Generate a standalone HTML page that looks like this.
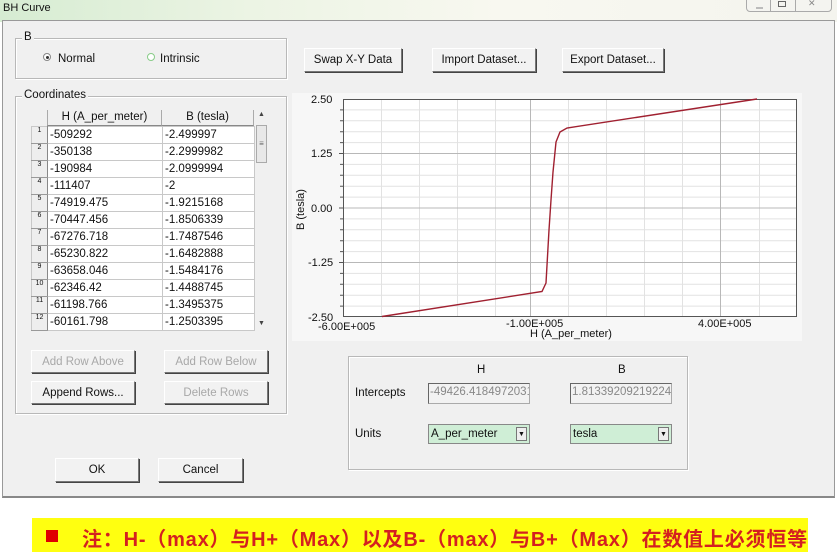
<!DOCTYPE html>
<html><head><meta charset="utf-8"><style>
*{box-sizing:border-box;margin:0;padding:0}
body{width:837px;height:552px;position:relative;overflow:hidden;background:#fff;font-family:"Liberation Sans",Arial,sans-serif;font-size:11.5px;color:#111}
.a{position:absolute}
.grp{position:absolute;border:1px solid #b8b8b8;box-shadow:inset 1px 1px 0 #fff,1px 1px 0 #fff}
.lg{position:absolute;top:-8px;left:6px;background:#f0f0f0;padding:0 2px;font-size:11.5px}
.btn{position:absolute;background:#f2f2f2;border:1px solid #fff;border-right-color:#777;border-bottom-color:#777;box-shadow:1px 1px 0 #444;text-align:center;font-size:11.5px;display:flex;align-items:center;justify-content:center}
.dis{color:#a8a8a8}
table{border-collapse:collapse;font-size:11.5px}
td{border:1px solid #c8c8c8;height:17px;padding:0 2px;background:#fff;white-space:nowrap}
td.n{background:#eee;font-size:7px;vertical-align:top;text-align:center;width:16px;border-right:1px solid #888;border-bottom:1px solid #999}
.fld{position:absolute;border:1px solid #aaa;border-top-color:#666;border-left-color:#666;background:#f2f2f2;color:#888;font-size:11.5px;padding:2px 1px;white-space:nowrap;overflow:hidden}
.dd{position:absolute;background:#cfeed6;border:1px solid #888;font-size:11.5px;padding:3px 2px}
.dd b{position:absolute;right:2px;top:2px;width:11px;height:14px;background:#eee;border:1px solid #777;font-size:7px;text-align:center;line-height:13px;font-weight:normal}
</style></head><body>
<div class="a" style="left:0;top:0;width:837px;height:22px;background:linear-gradient(90deg,#d6ecd2,#ecf4e4 30%,#f8f8f0 60%,#f4f4ee)"></div>
<div class="a" style="left:3px;top:2px;font-size:11px">BH Curve</div>
<div class="a" style="left:746px;top:-2px;width:86px;height:14px;border:1px solid #aaa;border-radius:0 0 4px 4px;background:#f4f4f0"></div>
<div class="a" style="left:770px;top:-2px;width:1px;height:14px;background:#aaa"></div>
<div class="a" style="left:795px;top:-2px;width:1px;height:14px;background:#aaa"></div>
<div class="a" style="left:756px;top:7px;width:7px;height:2px;background:#bbb"></div>
<div class="a" style="left:778px;top:1px;width:8px;height:6px;border:1px solid #666"></div>
<div class="a" style="left:808px;top:-2px;font-size:9px;color:#888">✕</div>
<div class="a" style="left:2px;top:20px;width:833px;height:478px;background:#f0f0f0;border:1px solid #999;border-bottom:2px solid #888"></div>

<div class="grp" style="left:15px;top:38px;width:272px;height:41px"><span class="lg">B</span></div>
<div class="a" style="left:43px;top:53px;width:8px;height:8px;border-radius:50%;border:1px solid #888;background:#fff"></div>
<div class="a" style="left:46px;top:56px;width:3px;height:3px;border-radius:50%;background:#333"></div>
<div class="a" style="left:58px;top:53px">Normal</div>
<div class="a" style="left:147px;top:53px;width:8px;height:8px;border-radius:50%;border:1px solid #8c8;background:#fff"></div>
<div class="a" style="left:160px;top:53px">Intrinsic</div>

<div class="grp" style="left:15px;top:96px;width:272px;height:318px"><span class="lg">Coordinates</span></div>
<div class="a" style="left:31px;top:110px;width:224px;height:16px;background:#f0f0f0"></div>
<div class="a" style="left:47px;top:110px;width:115px;height:16px;border-left:1px solid #aaa;border-right:1px solid #aaa;border-bottom:1px solid #888;text-align:center;line-height:15px">H (A_per_meter)</div>
<div class="a" style="left:162px;top:110px;width:92px;height:16px;border-right:1px solid #aaa;border-bottom:1px solid #888;text-align:center;line-height:15px">B (tesla)</div>
<table class="a" style="left:31px;top:126px;width:224px">
<tr><td class="n">1</td><td style="width:115px">-509292</td><td>-2.499997</td></tr>
<tr><td class="n">2</td><td>-350138</td><td>-2.2999982</td></tr>
<tr><td class="n">3</td><td>-190984</td><td>-2.0999994</td></tr>
<tr><td class="n">4</td><td>-111407</td><td>-2</td></tr>
<tr><td class="n">5</td><td>-74919.475</td><td>-1.9215168</td></tr>
<tr><td class="n">6</td><td>-70447.456</td><td>-1.8506339</td></tr>
<tr><td class="n">7</td><td>-67276.718</td><td>-1.7487546</td></tr>
<tr><td class="n">8</td><td>-65230.822</td><td>-1.6482888</td></tr>
<tr><td class="n">9</td><td>-63658.046</td><td>-1.5484176</td></tr>
<tr><td class="n">10</td><td>-62346.42</td><td>-1.4488745</td></tr>
<tr><td class="n">11</td><td>-61198.766</td><td>-1.3495375</td></tr>
<tr><td class="n">12</td><td>-60161.798</td><td>-1.2503395</td></tr>
</table>
<div class="a" style="left:258px;top:111px;font-size:7px;color:#444">▲</div>
<div class="a" style="left:256px;top:125px;width:11px;height:38px;background:#e8e8e8;border:1px solid #aaa;font-size:8px;text-align:center;line-height:36px;color:#666">≡</div>
<div class="a" style="left:258px;top:320px;font-size:7px;color:#444">▼</div>

<div class="btn dis" style="left:31px;top:350px;width:104px;height:23px">Add Row Above</div>
<div class="btn dis" style="left:164px;top:350px;width:104px;height:23px">Add Row Below</div>
<div class="btn" style="left:31px;top:381px;width:104px;height:23px">Append Rows...</div>
<div class="btn dis" style="left:164px;top:381px;width:104px;height:23px">Delete Rows</div>
<div class="btn" style="left:55px;top:458px;width:84px;height:24px">OK</div>
<div class="btn" style="left:158px;top:458px;width:85px;height:24px">Cancel</div>

<div class="btn" style="left:304px;top:48px;width:98px;height:24px">Swap X-Y Data</div>
<div class="btn" style="left:432px;top:48px;width:104px;height:24px">Import Dataset...</div>
<div class="btn" style="left:562px;top:48px;width:102px;height:24px">Export Dataset...</div>

<div class="a" style="left:292px;top:93px;width:510px;height:248px;background:#f7f7f7"></div>
<svg class="a" style="left:0;top:0" width="837" height="552">
<rect x="343" y="99" width="454" height="218" fill="#fff"/>
<g stroke="#e2e2e2" stroke-width="1">
<path d="M343 109.9H797M343 120.8H797M343 131.7H797M343 142.6H797M343 164.4H797M343 175.3H797M343 186.2H797M343 197.1H797M343 218.9H797M343 229.8H797M343 240.7H797M343 251.6H797M343 273.4H797M343 284.3H797M343 295.2H797M343 306.1H797"/>
<path d="M381.5 99V317M419.5 99V317M457.5 99V317M495.5 99V317M568.5 99V317M606.5 99V317M644.5 99V317M682.5 99V317M759.5 99V317"/>
</g>
<g stroke="#b8b8b8"><path d="M343 153.5H797M343 208H797M343 262.5H797M530.5 99V317M720.5 99V317"/></g>
<rect x="343.5" y="99.5" width="453" height="217" fill="none" stroke="#555"/>
<path d="M343 109.9h-3M343 120.8h-3M343 131.7h-3M343 142.6h-3M343 153.5h-4M343 164.4h-3M343 175.3h-3M343 186.2h-3M343 197.1h-3M343 208h-4M343 218.9h-3M343 229.8h-3M343 240.7h-3M343 251.6h-3M343 262.5h-4M343 273.4h-3M343 284.3h-3M343 295.2h-3M343 306.1h-3" stroke="#555"/>
<path d="M382 316.5 L542 291.5 L546 283 L549 230 L551 200 L553 172 L556 142 L560 132 L567 128 L757 99" fill="none" stroke="#a02030" stroke-width="1.4"/>
<g font-family="Liberation Sans,Arial,sans-serif" font-size="11" fill="#111">
<text x="311" y="103">2.50</text><text x="311" y="157">1.25</text><text x="311" y="212">0.00</text><text x="308" y="266">-1.25</text><text x="308" y="321">-2.50</text>
<text x="318" y="330">-6.00E+005</text><text x="506" y="327">-1.00E+005</text><text x="698" y="327">4.00E+005</text>
<text x="530" y="337">H (A_per_meter)</text>
<text transform="translate(304,230) rotate(-90)">B (tesla)</text>
</g>
</svg>

<div class="grp" style="left:348px;top:356px;width:340px;height:114px"></div>
<div class="a" style="left:477px;top:364px">H</div>
<div class="a" style="left:618px;top:364px">B</div>
<div class="a" style="left:355px;top:387px">Intercepts</div>
<div class="fld" style="left:428px;top:383px;width:102px;height:21px">-49426.4184972031</div>
<div class="fld" style="left:570px;top:383px;width:102px;height:21px">1.81339209219224</div>
<div class="a" style="left:355px;top:428px">Units</div>
<div class="dd" style="left:428px;top:424px;width:102px;height:20px">A_per_meter<b>▼</b></div>
<div class="dd" style="left:570px;top:424px;width:102px;height:20px">tesla<b>▼</b></div>

<div class="a" style="left:32px;top:518px;width:776px;height:34px;background:#ffff10"></div>
<div class="a" style="left:46px;top:530px;width:12px;height:12px;background:#e00000"></div>
<div class="a" style="left:82px;top:523px;font-family:'Liberation Sans','Noto Sans CJK SC',sans-serif;font-weight:bold;font-size:20px;color:#d42020;white-space:nowrap;letter-spacing:0.8px">注：H-（max）与H+（Max）以及B-（max）与B+（Max）在数值上必须恒等</div>
</body></html>
